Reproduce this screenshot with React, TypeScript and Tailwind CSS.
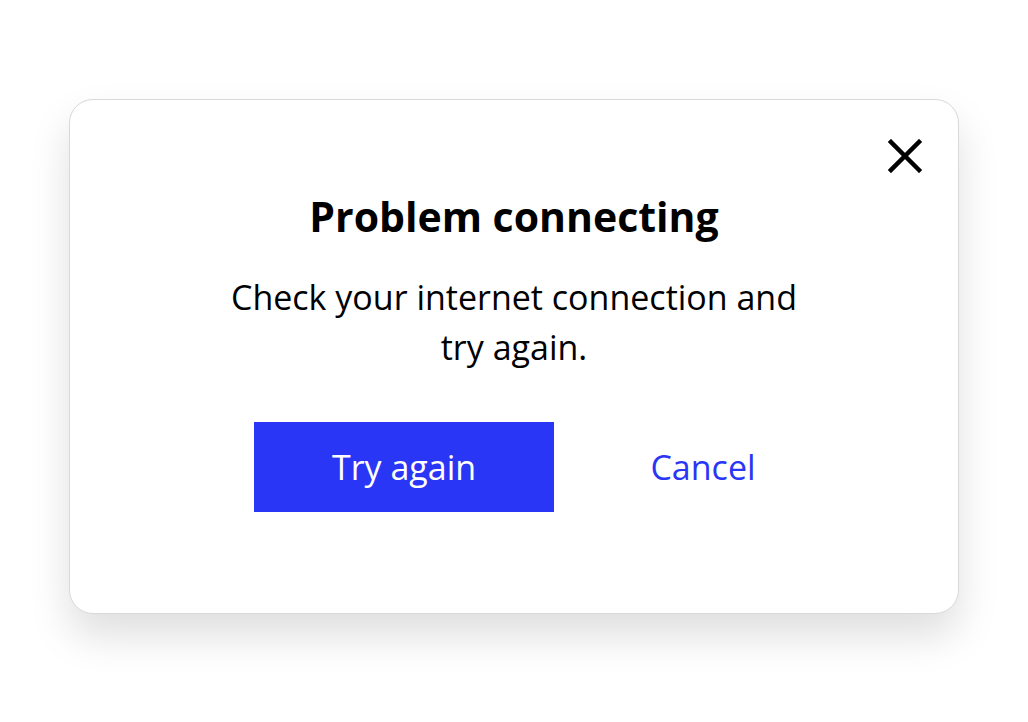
import React from "react";

export default function App() {
  return (
    <div className="w-[1028px] h-[722px] bg-white flex items-start justify-center pt-[99px]" style={{ fontFamily: "'Open Sans', 'Noto Sans', sans-serif" }}>
      <div className="relative w-[890px] h-[515px] bg-white border border-[#d9d9d9] rounded-[24px] shadow-[0_22px_40px_rgba(0,0,0,0.13)] flex flex-col items-center">
        <button className="absolute right-[36px] top-[39px] w-[34px] h-[34px]" aria-label="Close">
          <svg viewBox="0 0 34 34" width="34" height="34">
            <path d="M3 3 L31 31 M31 3 L3 31" stroke="#000" strokeWidth="4.5" strokeLinecap="square" />
          </svg>
        </button>
        <h1 className="mt-[92px] text-[41px] leading-[48px] font-bold text-black">Problem connecting</h1>
        <p className="mt-[32px] w-[590px] text-center text-[34px] leading-[50px] text-black">
          Check your internet connection and try again.
        </p>
        <div className="mt-[50px] flex items-center gap-[78px]">
          <button className="w-[300px] h-[90px] bg-[#2a36f5] text-white text-[34px]">Try again</button>
          <button className="w-[142px] h-[90px] text-[#2a36f5] text-[34px]">Cancel</button>
        </div>
      </div>
    </div>
  );
}
